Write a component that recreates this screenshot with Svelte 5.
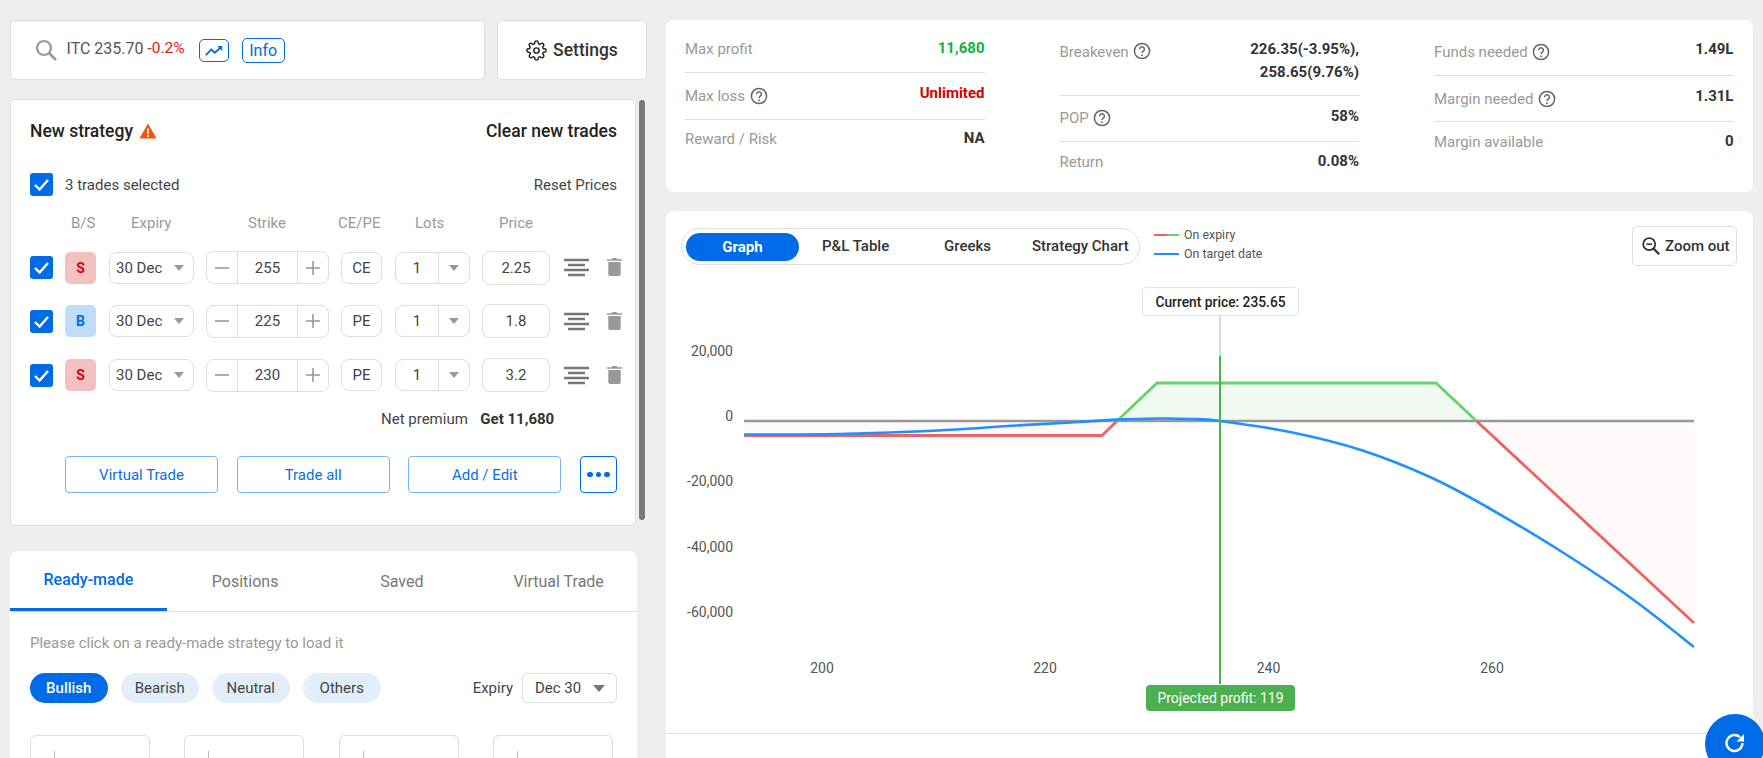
<script>
  const tradeRows = [
    { side: 'S', strike: 255, type: 'CE', price: '2.25' },
    { side: 'B', strike: 225, type: 'PE', price: '1.8' },
    { side: 'S', strike: 230, type: 'PE', price: '3.2' }
  ];
  const col1 = [
    { label: 'Max profit', value: '11,680', cls: 'green' },
    { label: 'Max loss', help: true, value: 'Unlimited', cls: 'red' },
    { label: 'Reward / Risk', value: 'NA' }
  ];
  const col2 = [
    { label: 'Breakeven', help: true, value: '226.35(-3.95%),', value2: '258.65(9.76%)' },
    { label: 'POP', help: true, value: '58%' },
    { label: 'Return', value: '0.08%' }
  ];
  const col3 = [
    { label: 'Funds needed', help: true, value: '1.49L' },
    { label: 'Margin needed', help: true, value: '1.31L' },
    { label: 'Margin available', value: '0' }
  ];
  const columns = [col1, col2, col3];
  const yTicks = [['20,000', 351], ['0', 416], ['-20,000', 481], ['-40,000', 547], ['-60,000', 612]];
  const xTicks = [['200', 822], ['220', 1045], ['240', 1268.5], ['260', 1492]];

  const blue = [[744,434.5],[839,434],[928,431],[1017,425.5],[1088,421.5],[1117,419.5],[1160,418.5],[1190,419],[1220,421],[1290,432],[1361,450],[1430,477],[1487,507],[1559,550],[1631,598],[1694,647]];
  function smooth(p) {
    let d = `M${p[0][0]} ${p[0][1]}`;
    for (let i = 0; i < p.length - 1; i++) {
      const a = p[Math.max(i - 1, 0)], b = p[i], c = p[i + 1], e = p[Math.min(i + 2, p.length - 1)];
      const c1x = b[0] + (c[0] - a[0]) / 6, c1y = b[1] + (c[1] - a[1]) / 6;
      const c2x = c[0] - (e[0] - b[0]) / 6, c2y = c[1] - (e[1] - b[1]) / 6;
      d += ` C${c1x.toFixed(1)} ${c1y.toFixed(1)} ${c2x.toFixed(1)} ${c2y.toFixed(1)} ${c[0]} ${c[1]}`;
    }
    return d;
  }
  const bluePath = smooth(blue);
</script>

{#snippet help()}
  <svg class="help" viewBox="0 0 18 18" width="18" height="18" aria-hidden="true">
    <circle cx="9" cy="9" r="7.6" fill="none" stroke="#666" stroke-width="1.5" />
    <path d="M6.6 7.2a2.4 2.4 0 1 1 3.7 2c-.9.6-1.3 1-1.3 1.9" fill="none" stroke="#666" stroke-width="1.5" />
    <circle cx="9" cy="13.2" r=".95" fill="#666" />
  </svg>
{/snippet}

{#snippet check()}
  <span class="check">
    <svg viewBox="0 0 23 23" width="23" height="23" aria-hidden="true">
      <path d="M5 12l4.6 4.6L18 7" fill="none" stroke="#fff" stroke-width="2.4" />
    </svg>
  </span>
{/snippet}

{#snippet caret()}
  <span class="caret"></span>
{/snippet}

<div class="page">
  <div class="left">
    <div class="top-row">
      <div class="box search">
        <svg class="search-ic" viewBox="0 0 22 22" width="22" height="22" aria-hidden="true">
          <circle cx="9" cy="9" r="7" fill="none" stroke="#999" stroke-width="2.2" />
          <path d="M14 14l7 7" stroke="#999" stroke-width="2.6" />
        </svg>
        <span class="ticker">ITC 235.70</span>
        <span class="chg">-0.2%</span>
        <span class="mini trend">
          <svg viewBox="0 0 22 14" width="20" height="13" aria-hidden="true">
            <path d="M2 12l6-6 4 3.5L19 3" fill="none" stroke="#006be6" stroke-width="2" />
            <path d="M14.5 2H20v5.5z" fill="#006be6" />
          </svg>
        </span>
        <span class="mini info">Info</span>
      </div>
      <div class="box settings">
        <svg viewBox="0 0 24 24" width="21" height="21" fill="none" stroke="#222" stroke-width="1.7" stroke-linejoin="round" aria-hidden="true">
          <circle cx="12" cy="12" r="3" />
          <path d="M19.4 15a1.65 1.65 0 0 0 .33 1.82l.06.06a2 2 0 1 1-2.83 2.83l-.06-.06a1.65 1.65 0 0 0-2.82 1.17V21a2 2 0 1 1-4 0v-.09a1.65 1.65 0 0 0-2.82-1.17l-.06.06a2 2 0 1 1-2.83-2.83l.06-.06A1.65 1.65 0 0 0 3.26 14H3a2 2 0 1 1 0-4h.09a1.65 1.65 0 0 0 1.17-2.82l-.06-.06a2 2 0 1 1 2.83-2.83l.06.06A1.65 1.65 0 0 0 10 3.09V3a2 2 0 1 1 4 0v.09a1.65 1.65 0 0 0 2.82 1.17l.06-.06a2 2 0 1 1 2.83 2.83l-.06.06A1.65 1.65 0 0 0 20.91 10H21a2 2 0 1 1 0 4h-.09a1.65 1.65 0 0 0-1.51 1z" />
        </svg>
        <span>Settings</span>
      </div>
    </div>

    <div class="box strategy">
      <div class="st-head">
        <div class="st-title">
          <span>New strategy</span>
          <svg viewBox="0 0 18 16" width="18" height="16" aria-hidden="true">
            <path d="M9 .5L17.6 15.5H.4z" fill="#f4540c" />
            <rect x="8.1" y="5.5" width="1.8" height="5.5" fill="#fff" />
            <rect x="8.1" y="12" width="1.8" height="1.8" fill="#fff" />
          </svg>
        </div>
        <span class="clear">Clear new trades</span>
      </div>

      <div class="sel-row">
        <div class="sel-left">
          {@render check()}
          <span>3 trades selected</span>
        </div>
        <span class="reset">Reset Prices</span>
      </div>

      <div class="col-labels">
        <span class="l1">B/S</span>
        <span class="l2">Expiry</span>
        <span class="l3">Strike</span>
        <span class="l4">CE/PE</span>
        <span class="l5">Lots</span>
        <span>Price</span>
      </div>

      <div class="rows">
        {#each tradeRows as r}
          <div class="trade">
            {@render check()}
            <span class="side {r.side === 'S' ? 'sell' : 'buy'}">{r.side}</span>
            <span class="ctl expiry">30 Dec {@render caret()}</span>
            <span class="ctl strike">
              <span class="step">
                <svg viewBox="0 0 14 14" width="14" height="14" aria-hidden="true"><path d="M0 7h14" stroke="#999" stroke-width="1.6" /></svg>
              </span>
              <span class="mid">{r.strike}</span>
              <span class="step">
                <svg viewBox="0 0 14 14" width="14" height="14" aria-hidden="true"><path d="M0 7h14M7 0v14" stroke="#999" stroke-width="1.6" /></svg>
              </span>
            </span>
            <span class="ctl type">{r.type}</span>
            <span class="ctl lots"><span class="lot-n">1</span><span class="lot-c">{@render caret()}</span></span>
            <span class="ctl price">{r.price}</span>
            <svg class="menu" viewBox="0 0 25 19" width="25" height="19" aria-hidden="true">
              <path d="M0 2h25M4 7h17M0 12h25M4 17h17" stroke="#777" stroke-width="2.6" />
            </svg>
            <svg class="trash" viewBox="0 0 15 19" width="15" height="19" aria-hidden="true">
              <path d="M1.3 5h12.4v12.2a1.8 1.8 0 0 1-1.8 1.8H3.1a1.8 1.8 0 0 1-1.8-1.8zM0 2.2h4.6L5.5 1h4l.9 1.2H15v1.6H0z" fill="#999" />
            </svg>
          </div>
        {/each}
      </div>

      <div class="net">
        <span>Net premium</span>
        <b>Get 11,680</b>
      </div>

      <div class="actions">
        <span class="act">Virtual Trade</span>
        <span class="act">Trade all</span>
        <span class="act">Add / Edit</span>
        <span class="act more"><i></i><i></i><i></i></span>
      </div>
    </div>

    <div class="lib">
      <div class="tabs">
        <span class="tab active">Ready-made</span>
        <span class="tab">Positions</span>
        <span class="tab">Saved</span>
        <span class="tab">Virtual Trade</span>
      </div>
      <div class="lib-body">
        <p class="hint">Please click on a ready-made strategy to load it</p>
        <div class="filters">
          <div class="pills">
            <span class="pill on">Bullish</span>
            <span class="pill">Bearish</span>
            <span class="pill">Neutral</span>
            <span class="pill">Others</span>
          </div>
          <div class="exp">
            <span>Expiry</span>
            <span class="exp-sel">Dec 30 <span class="caret dark"></span></span>
          </div>
        </div>
        <div class="thumbs">
          {#each [0, 1, 2, 3] as t}
            <div class="thumb"><i></i></div>
          {/each}
        </div>
      </div>
    </div>
    <div class="scrollbar"></div>
  </div>

  <div class="right">
    <div class="summary">
      {#each columns as col, ci}
        <div class="sum-col c{ci}">
          {#each col as item}
            <div class="sum-row">
              <span class="sum-label">{item.label}{#if item.help}{@render help()}{/if}</span>
              <span class="sum-val {item.cls ?? ''}">{item.value}{#if item.value2}<br />{item.value2}{/if}</span>
            </div>
          {/each}
        </div>
      {/each}
    </div>

    <div class="chart-card">
      <div class="toolbar">
        <div class="seg">
          <span class="seg-i on">Graph</span>
          <span class="seg-i pl">P&amp;L Table</span>
          <span class="seg-i gr">Greeks</span>
          <span class="seg-i sc">Strategy Chart</span>
        </div>
        <div class="legend">
          <div class="lg"><span class="swatch two"></span>On expiry</div>
          <div class="lg"><span class="swatch one"></span>On target date</div>
        </div>
        <div class="zoom">
          <svg viewBox="0 0 18 18" width="18" height="18" aria-hidden="true">
            <circle cx="7.2" cy="7.2" r="6" fill="none" stroke="#333" stroke-width="1.8" />
            <path d="M11.6 11.6l5.6 5.6" stroke="#333" stroke-width="2.2" />
            <path d="M4.4 7.2h5.6" stroke="#333" stroke-width="1.6" />
          </svg>
          <span>Zoom out</span>
        </div>
      </div>

      <div class="plot">
        <svg class="graph" viewBox="666 280 1087 453" width="1087" height="453" aria-hidden="true">
          <polygon points="744,421 1117,421 1102,435 744,435" fill="#fff9f9" />
          <polygon points="1476.5,421 1694,421 1694,623" fill="#fff9f9" />
          <polygon points="1117,421 1157,383 1436,383 1476.5,421" fill="#f0faf0" />
          <path d="M744 421H1694" stroke="#999" stroke-width="2.4" />
          <path d="M1220 316V356" stroke="#ccc" stroke-width="1.5" />
          <path d="M744 435.5H1102L1117 421M1476.5 421L1694 623" fill="none" stroke="#ef6262" stroke-width="2.8" />
          <path d="M1117 421L1157 383H1436L1476.5 421" fill="none" stroke="#68d468" stroke-width="2.8" />
          <path d={bluePath} fill="none" stroke="#1e90ff" stroke-width="2.6" />
          <path d="M1220 356V684" stroke="#4caf50" stroke-width="2" />
          {#each yTicks as t}
            <text class="tick" x="733" y={t[1] + 5} text-anchor="end">{t[0]}</text>
          {/each}
          {#each xTicks as t}
            <text class="tick" x={t[1]} y={668 + 5} text-anchor="middle">{t[0]}</text>
          {/each}
        </svg>
        <div class="tip current">Current price: 235.65</div>
        <div class="tip projected">Projected profit: 119</div>
      </div>
    </div>
  </div>

  <div class="fab">
    <svg viewBox="0 0 24 24" width="24" height="24" aria-hidden="true">
      <path d="M19.5 12a8 8 0 1 1-2.6-5.9" fill="none" stroke="#fff" stroke-width="2.4" />
      <path d="M21 3v7.5h-7.5z" fill="#fff" />
    </svg>
  </div>
</div>

<style>
  :global(body) {
    margin: 0;
    background: #eee;
  }
  .page {
    position: relative;
    display: flex;
    box-sizing: border-box;
    width: 1763px;
    height: 758px;
    overflow: hidden;
    padding: 20px 10px 0 10px;
    background: #eee;
    font-family: Roboto, "Liberation Sans", sans-serif;
    font-size: 14px;
    color: #333;
  }
  .left {
    position: relative;
    flex: 0 0 637px;
    margin-right: 19px;
  }
  .right {
    flex: 0 0 1087px;
  }
  .box {
    box-sizing: border-box;
    background: #fff;
    border: 1px solid #ddd;
    border-radius: 5px;
  }
  .top-row {
    display: flex;
    gap: 12px;
    height: 60px;
  }
  .search {
    flex: 0 0 475px;
    display: flex;
    align-items: center;
    padding: 0 0 0 23.5px;
    font-size: 16px;
  }
  .search-ic {
    margin-right: 10px;
  }
  .ticker {
    color: #555;
    margin-top: -4px;
  }
  .chg {
    color: #e02020;
    font-size: 15.5px;
    margin: -4px 0 0 4px;
  }
  .mini {
    box-sizing: border-box;
    display: flex;
    align-items: center;
    justify-content: center;
    border: 1px solid #006be6;
    border-radius: 5px;
    color: #006be6;
  }
  .trend {
    width: 30px;
    height: 23px;
    margin-left: 14px;
  }
  .info {
    width: 43px;
    height: 25px;
    margin-left: 13px;
  }
  .settings {
    flex: 0 0 150px;
    display: flex;
    align-items: center;
    justify-content: center;
    gap: 6px;
    font-size: 17.5px;
    font-weight: 500;
    color: #333;
  }
  .strategy {
    width: 626px;
    height: 427px;
    margin-top: 19px;
    padding: 0 18px 0 19px;
  }
  .st-head {
    display: flex;
    justify-content: space-between;
    align-items: center;
    height: 24px;
    margin-top: 19px;
    font-size: 17.5px;
    font-weight: 500;
    color: #222;
  }
  .st-title {
    display: flex;
    align-items: center;
    gap: 6px;
  }
  .sel-row {
    display: flex;
    justify-content: space-between;
    align-items: center;
    margin-top: 30px;
    height: 23px;
    color: #444;
  }
  .sel-left {
    display: flex;
    align-items: center;
    gap: 12px;
    font-size: 15px;
  }
  .reset {
    font-size: 15px;
  }
  .check {
    display: block;
    flex: 0 0 23px;
    width: 23px;
    height: 23px;
    border-radius: 3px;
    background: #006be6;
  }
  .check svg {
    display: block;
  }
  .col-labels {
    display: flex;
    margin-top: 17px;
    padding-left: 41px;
    height: 20px;
    line-height: 20px;
    font-size: 15px;
    color: #999;
  }
  .l1 { width: 60px; }
  .l2 { width: 117px; }
  .l3 { width: 90px; }
  .l4 { width: 77px; }
  .l5 { width: 84px; }
  .rows {
    margin-top: 17.5px;
    display: flex;
    flex-direction: column;
    gap: 21.75px;
  }
  .trade {
    display: grid;
    grid-template-columns: 35px 44px 97px 135px 54px 87px 82px 43px 15px;
    align-items: center;
    height: 32px;
    font-size: 15px;
  }
  .trash {
    margin-top: -2px;
  }
  .side {
    display: flex;
    align-items: center;
    justify-content: center;
    width: 31px;
    height: 32px;
    border-radius: 5px;
    font-size: 14px;
    font-weight: 700;
  }
  .sell {
    background: #f3c1c1;
    color: #d40000;
  }
  .buy {
    background: #bfdcfa;
    color: #006be6;
  }
  .ctl {
    box-sizing: border-box;
    display: flex;
    align-items: center;
    height: 32px;
    border: 1px solid #ddd;
    border-radius: 8px;
    color: #444;
    background: #fff;
  }
  .expiry {
    width: 85px;
    padding: 0 9px 0 6px;
    justify-content: space-between;
  }
  .caret {
    display: inline-block;
    width: 0;
    height: 0;
    border-left: 5.5px solid transparent;
    border-right: 5.5px solid transparent;
    border-top: 6px solid #999;
  }
  .caret.dark {
    border-top-color: #777;
    border-left-width: 6.5px;
    border-right-width: 6.5px;
    border-top-width: 7px;
  }
  .strike {
    width: 123px;
    height: 33px;
  }
  .step {
    display: flex;
    align-items: center;
    justify-content: center;
    width: 30px;
    height: 100%;
  }
  .mid {
    flex: 1;
    height: 100%;
    display: flex;
    align-items: center;
    justify-content: center;
    border-left: 1px solid #ddd;
    border-right: 1px solid #ddd;
  }
  .type {
    width: 41px;
    justify-content: center;
  }
  .lots {
    width: 75px;
  }
  .lot-n {
    width: 43px;
    height: 100%;
    display: flex;
    align-items: center;
    justify-content: center;
    border-right: 1px solid #ddd;
    box-sizing: border-box;
  }
  .lot-c {
    flex: 1;
    display: flex;
    justify-content: center;
  }
  .price {
    width: 68px;
    height: 34px;
    justify-content: center;
  }
  .net {
    display: flex;
    gap: 12.5px;
    margin: 19px 0 0 351px;
    height: 20px;
    line-height: 20px;
    font-size: 15px;
    color: #444;
  }
  .net b {
    font-weight: 700;
    color: #333;
  }
  .actions {
    display: flex;
    gap: 18.67px;
    margin: 27px 0 0 35px;
  }
  .act {
    box-sizing: border-box;
    display: flex;
    align-items: center;
    justify-content: center;
    width: 153px;
    height: 37px;
    border: 1px solid #7ab3f5;
    border-radius: 4px;
    color: #0a6fe0;
    font-size: 15px;
  }
  .more {
    width: 37px;
    border-color: #006be6;
    gap: 3px;
  }
  .more i {
    width: 5.5px;
    height: 5.5px;
    border-radius: 50%;
    background: #006be6;
  }
  .lib {
    width: 627px;
    margin-top: 25px;
    background: #fff;
    border-radius: 8px 8px 0 0;
    height: 300px;
  }
  .tabs {
    display: grid;
    grid-template-columns: repeat(4, 1fr);
    height: 60px;
    border-bottom: 1px solid #ddd;
    box-sizing: content-box;
  }
  .tab {
    display: flex;
    align-items: center;
    justify-content: center;
    font-size: 16px;
    color: #777;
    box-sizing: border-box;
    height: 60px;
  }
  .tab.active {
    color: #006be6;
    font-weight: 500;
    border-bottom: 3px solid #006be6;
    height: 60px;
  }
  .lib-body {
    padding: 0 20px;
  }
  .hint {
    margin: 21px 0 0;
    height: 20px;
    line-height: 20px;
    font-size: 15px;
    color: #999;
  }
  .filters {
    display: flex;
    justify-content: space-between;
    align-items: center;
    margin-top: 20px;
    height: 30px;
  }
  .pills {
    display: flex;
    gap: 13.5px;
  }
  .pill {
    display: flex;
    align-items: center;
    justify-content: center;
    width: 77.5px;
    height: 30px;
    border-radius: 15px;
    background: #e3eefb;
    color: #444;
    font-size: 15px;
  }
  .pill.on {
    background: #006be6;
    color: #fff;
    font-weight: 500;
  }
  .exp {
    display: flex;
    align-items: center;
    gap: 9px;
    font-size: 15px;
    color: #444;
  }
  .exp-sel {
    box-sizing: border-box;
    display: flex;
    align-items: center;
    justify-content: space-between;
    width: 95px;
    height: 30px;
    padding: 0 11px 0 12px;
    border: 1px solid #ddd;
    border-radius: 6px;
  }
  .thumbs {
    display: flex;
    gap: 34.4px;
    margin-top: 32px;
  }
  .thumb {
    box-sizing: border-box;
    width: 120px;
    height: 80px;
    border: 1px solid #ddd;
    border-radius: 6px;
    padding: 15px 0 0 23px;
  }
  .thumb i {
    display: block;
    width: 1px;
    height: 60px;
    background: #bbb;
  }
  .scrollbar {
    position: absolute;
    left: 629px;
    top: 80px;
    width: 5.5px;
    height: 420px;
    border-radius: 3px;
    background: #7a7a7a;
  }
  .summary {
    box-sizing: border-box;
    display: flex;
    gap: 75px;
    height: 172px;
    padding: 0 19px;
    background: #fff;
    border-radius: 8px;
  }
  .sum-col {
    flex: 0 0 299.5px;
  }
  .sum-row {
    display: flex;
    justify-content: space-between;
    box-sizing: border-box;
    border-bottom: 1px solid #ddd;
    font-size: 15px;
  }
  .sum-row:last-child {
    border-bottom: 0;
  }
  .c0 .sum-row:nth-child(1) { height: 53px; padding-top: 19px; }
  .c0 .sum-row:nth-child(2) { height: 47px; padding-top: 12px; }
  .c0 .sum-row:nth-child(3) { padding-top: 9px; }
  .c0 .sum-row:nth-child(2) .sum-label { margin-top: 1px; }
  .c0 .sum-row:nth-child(2) .sum-val { margin-top: -3px; }
  .c1 .sum-row:nth-child(1) { height: 76px; padding-top: 19px; }
  .c1 .sum-row:nth-child(1) .sum-label { margin-top: 2.5px; }
  .c1 .sum-row:nth-child(1) .sum-val { margin-top: -1.5px; }
  .c1 .sum-row:nth-child(2) { height: 46px; padding-top: 12px; }
  .c1 .sum-row:nth-child(2) .sum-val { margin-top: -3px; }
  .c1 .sum-row:nth-child(3) { padding-top: 10px; }
  .c2 .sum-row:nth-child(1) { height: 56px; padding-top: 19px; }
  .c2 .sum-row:nth-child(1) .sum-label { margin-top: 3px; }
  .c2 .sum-row:nth-child(1) .sum-val { margin-top: -1.5px; }
  .c2 .sum-row:nth-child(2) { height: 46px; padding-top: 12px; }
  .c2 .sum-row:nth-child(2) .sum-label { margin-top: 1px; }
  .c2 .sum-row:nth-child(2) .sum-val { margin-top: -3.5px; }
  .c2 .sum-row:nth-child(3) { padding-top: 10px; }
  .sum-label {
    display: flex;
    align-items: center;
    gap: 4.5px;
    height: 20px;
    color: #999;
  }
  .help {
    flex: none;
    margin-top: -1px;
  }
  .sum-val {
    font-weight: 700;
    font-size: 15px;
    line-height: 23px;
    height: auto;
    margin-top: -2px;
    text-align: right;
    color: #333;
  }
  .sum-val.green { color: #12b03c; }
  .sum-val.red { color: #d40000; }
  .chart-card {
    position: relative;
    margin-top: 19px;
    height: 560px;
    background: #fff;
    border-radius: 8px;
  }
  .toolbar {
    display: flex;
    align-items: center;
    height: 40px;
    padding: 15px 16px 0 15px;
  }
  .seg {
    box-sizing: border-box;
    position: relative;
    display: flex;
    width: 459px;
    height: 37px;
    border: 1px solid #ddd;
    border-radius: 19px;
    font-size: 15px;
    font-weight: 500;
    color: #333;
  }
  .seg-i {
    position: absolute;
    top: 0;
    height: 35px;
    line-height: 35px;
    white-space: nowrap;
  }
  .seg-i.on {
    left: 4px;
    top: 4px;
    width: 113px;
    height: 28px;
    line-height: 28px;
    text-align: center;
    border-radius: 14px;
    background: #006be6;
    color: #fff;
    font-weight: 700;
  }
  .pl { left: 140px; }
  .gr { left: 262px; }
  .sc { left: 350px; }
  .legend {
    margin: -4px 0 0 14px;
    font-size: 12.4px;
    color: #555;
    display: flex;
    flex-direction: column;
    gap: 5px;
  }
  .lg {
    display: flex;
    align-items: center;
    gap: 5px;
    height: 14px;
  }
  .swatch {
    width: 25px;
    height: 2px;
  }
  .swatch.two {
    background: linear-gradient(90deg, #ef6060 50%, #68d468 50%);
  }
  .swatch.one {
    background: #1e90ff;
  }
  .zoom {
    box-sizing: border-box;
    display: flex;
    align-items: center;
    gap: 5px;
    width: 105px;
    height: 40px;
    margin-left: auto;
    padding-left: 9px;
    border: 1px solid #ddd;
    border-radius: 5px;
    font-size: 15px;
    font-weight: 500;
  }
  .plot {
    position: relative;
    margin-top: 14px;
    height: 453px;
    border-bottom: 1px solid #ddd;
  }
  .graph {
    display: block;
  }
  .tick {
    font-family: Roboto, "Liberation Sans", sans-serif;
    font-size: 14px;
    fill: #555;
  }
  .tip {
    position: absolute;
    box-sizing: border-box;
    display: flex;
    align-items: center;
    justify-content: center;
    border-radius: 4px;
    white-space: nowrap;
  }
  .current {
    left: 476px;
    top: 7px;
    width: 157px;
    height: 29px;
    background: #fff;
    border: 1px solid #e4e4e4;
    font-size: 13.8px;
    font-weight: 500;
    color: #222;
  }
  .projected {
    left: 480px;
    top: 405px;
    width: 149px;
    height: 26px;
    background: #4caf50;
    color: #fff;
    font-size: 14px;
  }
  .fab {
    position: absolute;
    left: 1705px;
    top: 714px;
    width: 60px;
    height: 60px;
    border-radius: 50%;
    background: #006be6;
    display: flex;
    align-items: center;
    justify-content: center;
  }
  .fab svg {
    margin-bottom: 2px;
  }
</style>
